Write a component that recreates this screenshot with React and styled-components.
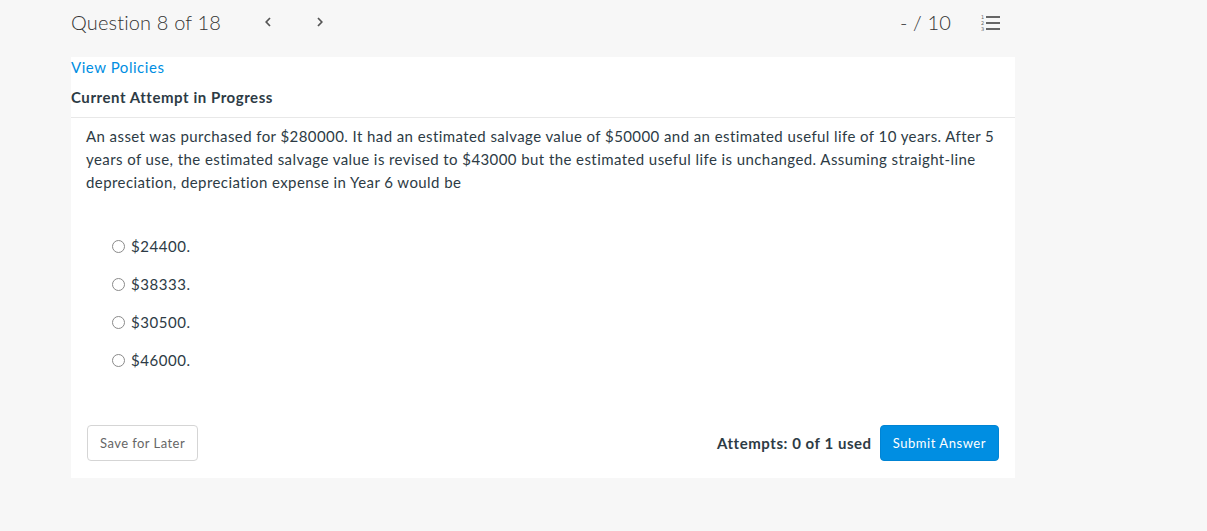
import React from "react";
import styled, { createGlobalStyle } from "styled-components";

const Global = createGlobalStyle`
  html, body { margin: 0; padding: 0; background: #f7f7f7; }
  body { font-family: Lato, "Noto Sans", sans-serif; color: #2d3b45; letter-spacing: 0.55px; }
  * { box-sizing: border-box; }
`;

const Page = styled.div`
  width: 1207px;
  height: 531px;
  padding-left: 71px;
  background: #f7f7f7;
`;

const Column = styled.div`
  width: 944px;
`;

const Header = styled.header`
  height: 57px;
  display: flex;
  align-items: center;
  padding-bottom: 14px;
`;

const Title = styled.h1`
  margin: 0;
  font-size: 20px;
  font-weight: 300;
  color: #333;
  letter-spacing: 0.15px;
`;

const NavButton = styled.button`
  border: 0;
  background: none;
  padding: 0;
  margin-left: ${(p) => p.$ml}px;
  display: flex;
  align-items: center;
  color: #666;
  cursor: pointer;
`;

const Spacer = styled.div`
  flex: 1;
`;

const Score = styled.span`
  font-size: 20px;
  font-weight: 300;
  color: #333;
  letter-spacing: 0.15px;
  margin-right: 30px;
`;

const ListIcon = styled.svg`
  display: block;
  margin-right: 15px;
  margin-top: 1px;
`;

const Panel = styled.main`
  background: #fff;
  height: 421px;
  display: flex;
  flex-direction: column;
`;

const Policies = styled.a`
  display: block;
  color: #008ee2;
  font-size: 15px;
  line-height: 20px;
  text-decoration: none;
`;

const Attempt = styled.h2`
  margin: 0;
  font-size: 15px;
  font-weight: 700;
  line-height: 20px;
  padding-top: 10px;
  padding-bottom: 10px;
  border-bottom: 1px solid #e8e8e8;
`;

const Body = styled.div`
  padding: 7px 16px 0 15px;
  flex: 1;
  display: flex;
  flex-direction: column;
`;

const Question = styled.p`
  margin: 0;
  font-size: 15px;
  line-height: 23px;
  color: #2d3b45;
  letter-spacing: 0.42px;
`;

const Options = styled.div`
  margin-top: 42px;
  padding-left: 26px;
  display: flex;
  flex-direction: column;
  gap: 18px;
`;

const Option = styled.label`
  display: flex;
  align-items: center;
  gap: 6px;
  font-size: 15px;
  line-height: 20px;
  color: #2d3b45;
`;

const Radio = styled.span`
  width: 13px;
  height: 13px;
  border-radius: 50%;
  border: 1px solid #8a8a8a;
  background: #fff;
  display: inline-block;
  margin-top: 1px;
`;

const Footer = styled.div`
  margin-top: auto;
  margin-bottom: 17px;
  display: flex;
  align-items: center;
`;

const SaveButton = styled.button`
  height: 36px;
  padding: 0 12px;
  border: 1px solid #d5d5d5;
  border-radius: 4px;
  background: #fff;
  color: #666;
  font-family: Lato, sans-serif;
  font-size: 13px;
  letter-spacing: 0.45px;
  margin-left: 1px;
`;

const AttemptsText = styled.span`
  margin-left: auto;
  font-size: 15px;
  font-weight: 700;
  color: #2d3b45;
  margin-right: 8px;
`;

const SubmitButton = styled.button`
  height: 36px;
  padding: 0 12px;
  border: 1px solid #0084d4;
  border-radius: 4px;
  background: #008ee2;
  color: #fff;
  font-family: Lato, sans-serif;
  font-size: 13px;
  letter-spacing: 0.55px;
`;

const Chevron = ({ dir }) => (
  <svg width="6" height="10" viewBox="0 0 6 10">
    <path
      d={dir === "left" ? "M5 1 L1.2 5 L5 9" : "M1 1 L4.8 5 L1 9"}
      fill="none"
      stroke="#555"
      strokeWidth="1.7"
    />
  </svg>
);

const options = ["$24400.", "$38333.", "$30500.", "$46000."];

export default function App() {
  return (
    <>
      <Global />
      <Page>
        <Column>
          <Header>
            <Title>Question 8 of 18</Title>
            <NavButton $ml={44} aria-label="Previous">
              <Chevron dir="left" />
            </NavButton>
            <NavButton $ml={46} aria-label="Next">
              <Chevron dir="right" />
            </NavButton>
            <Spacer />
            <Score>- / 10</Score>
            <ListIcon width="19" height="17" viewBox="0 0 19 17">
              <text x="0" y="4.5" fontSize="5" fill="#666" fontFamily="DejaVu Sans">1</text>
              <text x="0" y="10.5" fontSize="5" fill="#666" fontFamily="DejaVu Sans">2</text>
              <text x="0" y="16.5" fontSize="5" fill="#666" fontFamily="DejaVu Sans">3</text>
              <rect x="5" y="2" width="14" height="2" fill="#666" />
              <rect x="5" y="8" width="14" height="2" fill="#666" />
              <rect x="5" y="14" width="14" height="2" fill="#666" />
            </ListIcon>
          </Header>
          <Panel>
            <Policies href="#">View Policies</Policies>
            <Attempt>Current Attempt in Progress</Attempt>
            <Body>
              <Question>
                An asset was purchased for $280000. It had an estimated salvage value of $50000 and an
                estimated useful life of 10 years. After 5 years of use, the estimated salvage value is
                revised to $43000 but the estimated useful life is unchanged. Assuming straight-line
                depreciation, depreciation expense in Year 6 would be
              </Question>
              <Options>
                {options.map((o) => (
                  <Option key={o}>
                    <Radio />
                    {o}
                  </Option>
                ))}
              </Options>
              <Footer>
                <SaveButton>Save for Later</SaveButton>
                <AttemptsText>Attempts: 0 of 1 used</AttemptsText>
                <SubmitButton>Submit Answer</SubmitButton>
              </Footer>
            </Body>
          </Panel>
        </Column>
      </Page>
    </>
  );
}
